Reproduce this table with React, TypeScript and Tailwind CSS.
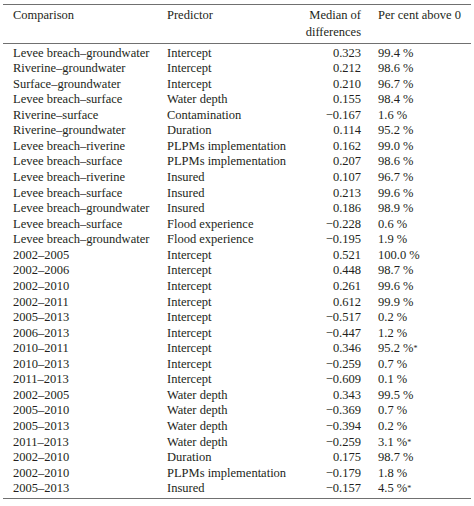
const rows: [string, string, string, string, boolean?][] = [
  ['Levee breach–groundwater', 'Intercept', '0.323', '99.4 %'],
  ['Riverine–groundwater', 'Intercept', '0.212', '98.6 %'],
  ['Surface–groundwater', 'Intercept', '0.210', '96.7 %'],
  ['Levee breach–surface', 'Water depth', '0.155', '98.4 %'],
  ['Riverine–surface', 'Contamination', '−0.167', '1.6 %'],
  ['Riverine–groundwater', 'Duration', '0.114', '95.2 %'],
  ['Levee breach–riverine', 'PLPMs implementation', '0.162', '99.0 %'],
  ['Levee breach–surface', 'PLPMs implementation', '0.207', '98.6 %'],
  ['Levee breach–riverine', 'Insured', '0.107', '96.7 %'],
  ['Levee breach–surface', 'Insured', '0.213', '99.6 %'],
  ['Levee breach–groundwater', 'Insured', '0.186', '98.9 %'],
  ['Levee breach–surface', 'Flood experience', '−0.228', '0.6 %'],
  ['Levee breach–groundwater', 'Flood experience', '−0.195', '1.9 %'],
  ['2002–2005', 'Intercept', '0.521', '100.0 %'],
  ['2002–2006', 'Intercept', '0.448', '98.7 %'],
  ['2002–2010', 'Intercept', '0.261', '99.6 %'],
  ['2002–2011', 'Intercept', '0.612', '99.9 %'],
  ['2005–2013', 'Intercept', '−0.517', '0.2 %'],
  ['2006–2013', 'Intercept', '−0.447', '1.2 %'],
  ['2010–2011', 'Intercept', '0.346', '95.2 %', true],
  ['2010–2013', 'Intercept', '−0.259', '0.7 %'],
  ['2011–2013', 'Intercept', '−0.609', '0.1 %'],
  ['2002–2005', 'Water depth', '0.343', '99.5 %'],
  ['2005–2010', 'Water depth', '−0.369', '0.7 %'],
  ['2005–2013', 'Water depth', '−0.394', '0.2 %'],
  ['2011–2013', 'Water depth', '−0.259', '3.1 %', true],
  ['2002–2010', 'Duration', '0.175', '98.7 %'],
  ['2002–2010', 'PLPMs implementation', '−0.179', '1.8 %'],
  ['2005–2013', 'Insured', '−0.157', '4.5 %', true],
]

export default function App() {
  return (
    <div className="w-[474px] h-[506px] bg-white px-[3px] pt-[4px] text-[#231f20] text-[12.5px] [font-family:'Liberation_Serif',serif]">
      <div className="border-t border-b border-[#707070]">
        {/* Header */}
        <div className="grid grid-cols-[164px_194px_1fr] pt-[2px] pb-[3px] border-b border-[#707070] leading-[16.5px]">
          <div className="pl-[10px]">Comparison</div>
          <div className="flex justify-between">
            <span>Predictor</span>
            <span className="text-right">
              Median of
              <br />
              differences
            </span>
          </div>
          <div className="pl-[17px]">Per cent above 0</div>
        </div>
        {/* Body */}
        <div className="pt-[1.5px] pb-[1px] leading-[15.57px]">
          {rows.map((r, i) => (
            <div key={i} className="grid grid-cols-[164px_194px_1fr]">
              <div className="pl-[10px]">{r[0]}</div>
              <div className="flex justify-between">
                <span>{r[1]}</span>
                <span>{r[2]}</span>
              </div>
              <div className="pl-[17px]">
                {r[3]}
                {r[4] && <sup className="text-[8px] relative -top-[1px]">*</sup>}
              </div>
            </div>
          ))}
        </div>
      </div>
    </div>
  )
}
